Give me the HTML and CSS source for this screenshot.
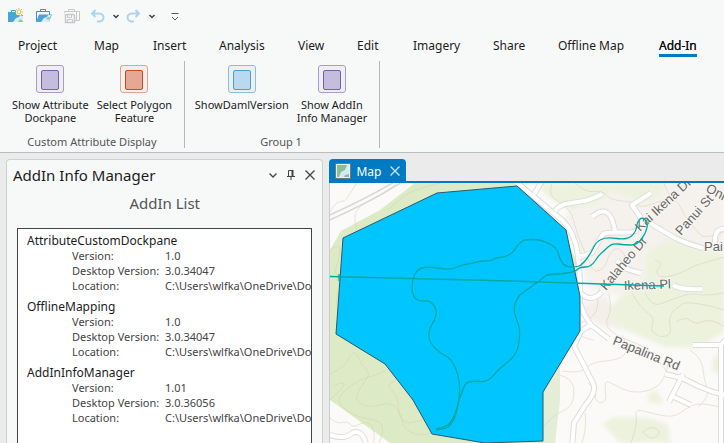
FILE: index.html
```html
<!DOCTYPE html>
<html lang="en">
<head>
<meta charset="utf-8">
<title>AddIn Info Manager</title>
<link rel="stylesheet" href="styles.css">
</head>
<body>
<header class="top">
  <div class="quick">
    <button class="quick-btn" aria-label="New project"><svg width="16" height="16" viewBox="0 0 16 16"><path d="M0 4h8v3h7v7H0z" fill="#4ba3da"/><path d="M3.500 4V2.500h4V4" fill="none" stroke="#4ba3da"/><path d="M5 14l3-4 3-1 1-2 3 1v6z" fill="#d8edf8"/><path d="M10 14l2-3 3 2v1z" fill="#9cc69b"/><circle cx="11" cy="4" r="2" fill="#fffbe0" stroke="#e0bd3b"/><path d="M11 0v1M11 7v1M7 4h1M14 4h1M8 1l1 1M14 1l-1 1M8 7l1-1M14 7l-1-1" stroke="#e0bd3b"/></svg></button>
    <button class="quick-btn" aria-label="Open project"><svg width="16" height="16" viewBox="0 0 16 16"><path d="M.5 13V3.500h13V7M4.500 3.500v-2h5v2" fill="none" stroke="#4191c7"/><path d="M3 6.500h13L13 14H0z" fill="#4ba3da"/><path d="M5 14l3-4 3-1 1-2h3l-2 7z" fill="#d8edf8"/><path d="M10 11l2-2h2l-1 3z" fill="#9cc69b"/></svg></button>
    <button class="quick-btn" aria-label="Save project"><svg width="16" height="16" viewBox="0 0 16 16" fill="none" stroke="#c6c8c9"><path d="M.5 5V3.500h15v9H11M4.500 3.500v-2h6v2M12.500 3v9"/><path d="M1.500 6.500h8l1 1v7h-9z" fill="#f7f9f8" stroke-width="1.500"/><path d="M3.500 7v2.500h4V7M3.500 14v-2.500h5V14"/></svg></button>
    <button class="quick-btn undo" aria-label="Undo"><svg width="16" height="16" viewBox="0 0 16 16" fill="none" stroke="#afd3eb" stroke-width="2"><path d="M5.500 2L2 5.500 5.500 9M2 5.500h7c6 0 6 8 0 8H7"/></svg></button>
    <button class="quick-btn arrow" aria-label="Undo list"><svg width="8" height="16" viewBox="0 0 8 16" fill="none" stroke="#3d4245" stroke-width="1.500"><path d="M1.500 7L4 9.500 6.500 7"/></svg></button>
    <button class="quick-btn redo" aria-label="Redo"><svg width="16" height="16" viewBox="0 0 16 16" fill="none" stroke="#afd3eb" stroke-width="2"><path d="M9.500 2L13 5.500 9.500 9M13 5.500H6c-6 0-6 8 0 8h2"/></svg></button>
    <button class="quick-btn arrow" aria-label="Redo list"><svg width="8" height="16" viewBox="0 0 8 16" fill="none" stroke="#3d4245" stroke-width="1.500"><path d="M1.500 7L4 9.500 6.500 7"/></svg></button>
    <button class="quick-btn customize" aria-label="Customize toolbar"><svg width="8" height="16" viewBox="0 0 8 16" fill="none" stroke="#55595b"><path d="M.5 5.500h7M1 9l3 3 3-3"/></svg></button>
  </div>
  <nav class="tabs">
    <a href="#">Project</a><a href="#">Map</a><a href="#">Insert</a><a href="#">Analysis</a><a href="#">View</a><a href="#">Edit</a><a href="#">Imagery</a><a href="#">Share</a><a href="#">Offline Map</a><a href="#" class="active">Add-In</a>
  </nav>
  <div class="ribbon">
    <section class="group attributes">
      <div class="commands">
        <button class="command"><span class="tile purple"></span>Show Attribute<br>Dockpane</button>
        <button class="command"><span class="tile orange"></span>Select Polygon<br>Feature</button>
      </div>
      <h2>Custom Attribute Display</h2>
    </section>
    <section class="group info">
      <div class="commands">
        <button class="command"><span class="tile blue"></span>ShowDamlVersion</button>
        <button class="command"><span class="tile purple"></span>Show AddIn<br>Info Manager</button>
      </div>
      <h2>Group 1</h2>
    </section>
  </div>
</header>
<main class="workspace">
  <aside class="pane">
    <div class="pane-head">
      <h1>AddIn Info Manager</h1>
      <button aria-label="Pane options"><svg width="10" height="12" viewBox="0 0 10 12" fill="none" stroke="#444" stroke-width="1.300"><path d="M1.500 4.500L5 8l3.500-3.500"/></svg></button>
      <button aria-label="Pin"><svg width="10" height="12" viewBox="0 0 10 12" fill="none" stroke="#444"><path d="M2.500 7V1.500h4V7M1 7.500h8M5 7v4"/><path d="M6.500 1v6" stroke-width="2"/></svg></button>
      <button aria-label="Close pane"><svg width="12" height="12" viewBox="0 0 12 12" fill="none" stroke="#444" stroke-width="1.300"><path d="M1.500 1.500l9 9M10.500 1.500l-9 9"/></svg></button>
    </div>
    <p class="list-title">AddIn List</p>
    <div class="list">
      <section class="addin"><h3>AttributeCustomDockpane</h3><dl><dt>Version:</dt><dd>1.0</dd><dt>Desktop Version:</dt><dd>3.0.34047</dd><dt>Location:</dt><dd>C:\Users\wlfka\OneDrive\Do</dd></dl></section>
      <section class="addin"><h3>OfflineMapping</h3><dl><dt>Version:</dt><dd>1.0</dd><dt>Desktop Version:</dt><dd>3.0.34047</dd><dt>Location:</dt><dd>C:\Users\wlfka\OneDrive\Do</dd></dl></section>
      <section class="addin"><h3>AddInInfoManager</h3><dl><dt>Version:</dt><dd>1.01</dd><dt>Desktop Version:</dt><dd>3.0.36056</dd><dt>Location:</dt><dd>C:\Users\wlfka\OneDrive\Do</dd></dl></section>
    </div>
  </aside>
  <section class="view">
    <div class="view-tabs">
      <div class="view-tab">
        <svg width="16" height="16" viewBox="0 0 16 16"><path d="M.5.5h15v15H.5z" fill="#8fbc94" stroke="#777" /><path d="M1.500 1.500h13v13h-13z" fill="none" stroke="#e9f2ea"/><path d="M14 2v9l-4 1-1 2H4l2-5 4-2 2-5z" fill="#d4ebf7"/></svg>
        <span>Map</span>
        <button aria-label="Close map"><svg width="10" height="10" viewBox="0 0 10 10" fill="none" stroke="#cfe7f8" stroke-width="1.300"><path d="M.5.5l9 9M9.500.5l-9 9"/></svg></button>
      </div>
    </div>
    <div class="map">
    <svg viewBox="330 183 394 260" preserveAspectRatio="xMinYMin slice" role="img" aria-label="Map">
      <defs>
        <filter id="soft" x="-10%" y="-10%" width="120%" height="120%"><feGaussianBlur stdDeviation="2"/></filter>
      </defs>
      <rect x="330" y="183" width="394" height="260" fill="#fbfaf9"/>
      <g filter="url(#soft)">
        <path d="M575 183H724V310L650 300 590 290 565 225z" fill="#f5f2ee"/>
        <path d="M575 310L605 295 625 330 600 325z" fill="#f3efe9"/>
      </g>
      <g fill="#dcebc5">
        <path d="M415 183H520L560 225 576 260 578 300 543 392V443H390L330 400V250L341 231 380 210z"/>
        <path d="M579 331L560 360V400L555 443H540V390z" fill="#e4eed6"/>
      </g>
      <g fill="#edf2de" filter="url(#soft)">
        <path d="M537 183H668L652 202 610 192 598 203 570 210 548 197z"/>
        <path d="M647 250L670 240 724 255V332L700 348 665 347 625 330 606 314 620 296 645 280z"/>
        <path d="M602 424L614 417 650 418 668 424 671 443H620z"/>
        <path d="M648 393L656 390 663 400 660 404 648 402zM712 360l12-10v25l-12-4z"/>
      </g>
      <g class="contours">
        <polyline points="330,212 336,201 345,202 350,193 357,183"/>
        <polyline points="357,232 353,217 360,205 375,199 388,190 397,183"/>
        <polyline points="388,210 400,199 410,192 425,187 440,183"/>
        <polyline points="330,250 341,242 339,260 334,272 340,282 336,305"/>
        <polyline points="330,374 345,367 350,354 356,352 362,366 371,374 359,389 355,401 370,408 390,402 400,411 404,430 424,437 432,432"/>
        <polyline points="385,371 374,376 360,379 341,393 338,403 352,415 368,419 380,421 384,431 379,443"/>
        <polyline points="395,380 387,386 392,390 398,399 399,418 410,425 426,418"/>
        <polyline points="330,400 342,389 346,381 335,385"/>
        <polyline points="330,418 337,424 348,421 353,428 365,421 375,427 374,443"/>
        <polyline points="552,183 548,195 562,203 572,213 578,238 588,258 594,273 605,268 610,251 620,247 628,262 620,269 600,282 598,295"/>
        <polyline points="575,183 586,193 602,190 610,200 635,202 640,208 660,201 673,198"/>
        <polyline points="664,183 668,195 680,204 685,218 695,228 704,240 724,232"/>
        <polyline points="597,293 600,310 585,322 575,324 580,338 594,340"/>
        <polyline points="609,293 612,310 604,325 618,337 642,345 657,358 668,373"/>
        <polyline points="632,293 640,307 655,318 650,330 660,338 672,334 668,319 675,308 690,300 724,310"/>
        <polyline points="645,293 652,307 668,301 690,293 707,296 724,293"/>
        <polyline points="676,322 685,316 696,325 710,318 724,326"/>
        <polyline points="655,260 664,263 655,271 661,278 680,274 695,265 715,260 724,257"/>
        <polyline points="562,371 580,374 592,362 619,360 630,349 622,335"/>
        <polyline points="668,365 664,381 651,391 630,393 613,384 604,380 607,403 595,402 596,390 588,383"/>
        <polyline points="543,428 553,415 570,408 575,395 572,379 560,375"/>
        <polyline points="724,408 702,402 686,408 675,417 657,415 634,408 638,423 631,443"/>
        <polyline points="585,413 587,427 582,443"/>
        <polyline points="643,432 648,427 658,428 660,435 650,440 643,432"/>
        <polyline points="690,350 702,358 704,380 710,397 698,407"/>
      </g>
      <g class="highway">
        <path d="M325 217Q362 201 396 181M325 222Q365 205 404 181"/>
      </g>
      <g class="casing">
        <path d="M515 181L557 216C575 228 580 250 580 292V303L584 314 591 325 609 339M665 374L682 378 698 386 713 392 735 397M533 196L542 181M555 211C564 198 578 208 602 194M592 217C605 205 613 214 615 232M579 257L592 253 603 234C612 230 626 235 636 231L643 221 632 205 651 193M648 222L675 238Q690 245 703 248M715 245C714 231 718 228 730 228M617 260C623 270 633 271 641 273M673 285Q680 290 702 289M580 292Q590 304 602 292M591 325L581 331 574 346 593 383Q597 392 586 404L574 423 572 448M693 345H721V448M721 345L728 337M683 374L669 402M674 397L691 405M330 435Q345 440 352 433 363 428 367 448"/>
      </g>
      <g class="road">
        <path d="M515 181L557 216C575 228 580 250 580 292V303L584 314 591 325 609 339M665 374L682 378 698 386 713 392 735 397M533 196L542 181M555 211C564 198 578 208 602 194M592 217C605 205 613 214 615 232M579 257L592 253 603 234C612 230 626 235 636 231L643 221 632 205 651 193M648 222L675 238Q690 245 703 248M715 245C714 231 718 228 730 228M617 260C623 270 633 271 641 273M673 285Q680 290 702 289M580 292Q590 304 602 292M591 325L581 331 574 346 593 383Q597 392 586 404L574 423 572 448M693 345H721V448M721 345L728 337M683 374L669 402M674 397L691 405M330 435Q345 440 352 433 363 428 367 448"/>
      </g>
      <g class="labels">
        <text transform="translate(640 232) rotate(-43)">Kai Ikena Dr</text>
        <text transform="translate(681 236) rotate(-48)">Panui St</text>
        <text transform="translate(705 191) rotate(28)">Oni</text>
        <text transform="translate(704 251)">Pai</text>
        <text transform="translate(606 291) rotate(-50)">Kalaheo Dr</text>
        <text transform="translate(624 290) rotate(-2)">Ikena Pl</text>
        <text transform="translate(612 344) rotate(22)">Papalina Rd</text>
      </g>
      <path class="area" d="M343 238L437 193 517 186 566 230 580 296V331L543 392V441L485 443 432 434 413 400 385 364 336 334z"/>
      <g class="trail">
        <polyline points="524,240 517,245 514,252 505,257 495,258 491,261 480,261 473,263 462,265 450,270 432,267 418,268 412,280 412,292 415,299 420,301 431,301 437,310 435,320 428,331 430,343 440,353 450,358 457,370 460,386 459,400 456,416 450,426 445,429 436,430"/>
        <polyline points="436,429 447,427 453,419 457,408 459,400 462,393 465,383 472,381 488,382 498,370 508,362 517,353 520,336 519,325 513,310 517,298 522,293 541,280 547,274 564,274 576,271 580,267 591,267 599,255 604,251 612,243 624,245 637,245 646,233 648,222 642,217 637,222 636,232 627,240 606,237 596,242 591,253 582,265 576,267 566,267 560,260 557,248 544,241 534,239 524,240"/>
        <path d="M329 276.500L510 281 664 286M339 274v7"/>
      </g>
    </svg>
    </div>
  </section>
</main>
<script src="map.js"></script>
</body>
</html>
```
FILE: styles.css
```css
* { box-sizing: border-box; }
body {
  margin: 0;
  height: 100vh;
  display: flex;
  flex-direction: column;
  overflow: hidden;
  background: #ebebeb;
  color: #1c1c1c;
  font: 12px/15px "Noto Sans", "Open Sans", sans-serif;
}
h1, h2, h3, p, dl, dd { margin: 0; font-weight: 400; font-size: inherit; }
button { padding: 0; border: 0; background: none; font: inherit; color: inherit; }
svg { display: block; }
a { color: inherit; text-decoration: none; }

.top { background: #f7f9f8; border-bottom: 1px solid #b9bdbf; }
.quick { display: flex; align-items: center; height: 32px; padding-left: 8px; gap: 12px; }
.undo { margin-left: -2px; }
.redo { margin-left: -6px; }
.arrow { margin-left: -6px; }
.customize { margin-left: 3px; }

.tabs {
  display: grid;
  grid-template-columns: 76px 59px 66px 79px 59px 56px 80px 65px 101px auto;
  justify-content: start;
  padding: 6px 0 3px 18px;
}
.tabs a { justify-self: start; line-height: 16px; border-bottom: 3px solid transparent; }
.tabs .active { border-color: #007ac2; color: #111; text-shadow: 0 0 #111; }

.ribbon { display: flex; height: 92px; padding: 1px 0 4px; }
.group { display: flex; flex-direction: column; border-right: 1px solid #b5b8b9; }
.attributes { width: 185px; }
.info { width: 195px; padding-right: 2px; }
.commands { display: flex; justify-content: center; gap: 8px; flex: 1; }
.command { align-self: flex-start; padding-top: 4px; font-size: 11px; line-height: 13px; text-align: center; white-space: nowrap; }
.group h2 { font-size: 11px; line-height: 13px; padding-bottom: 0; color: #555; text-align: center; }
.tile { display: block; width: 28px; height: 28px; margin: 0 auto 5px; padding: 4px; border: 1px solid; border-radius: 3px; background: #efefef; }
.tile::before { content: ""; display: block; height: 18px; border: 1px solid; border-radius: 2px; }
.purple { border-color: #a99bcf; }
.purple::before { background: #c5bddd; border-color: #7562a6; }
.orange { border-color: #e9a18c; }
.orange::before { background: #e5a895; border-color: #c9491f; }
.blue { border-color: #84bfe6; }
.blue::before { background: #bbd9ee; border-color: #4b9fd4; }

.workspace { flex: 1; min-height: 0; display: flex; gap: 6px; padding: 6px 0 0 6px; }
.pane { flex: 0 0 317px; display: flex; flex-direction: column; border: 1px solid #cdd0d1; border-bottom: 0; border-radius: 4px 4px 0 0; background: #f7f9f8; }
.pane-head { display: flex; align-items: center; gap: 8px; padding: 0 6px; height: 30px; }
.pane-head h1 { flex: 1; font-size: 15px; line-height: 20px; }
.list-title { margin-top: 3px; text-align: center; font-size: 15px; line-height: 20px; color: #555; }
.list { flex: 1; min-height: 0; margin: 15px 10px 0; padding: 4px 0 0 9px; border: 1px solid #444; border-bottom: 0; background: #fff; overflow: hidden; }
.addin { margin-bottom: 6px; }
.addin dl { display: grid; grid-template-columns: 93px 1fr; margin-left: 45px; font-size: 11px; color: #444; white-space: nowrap; }

.view { flex: 1; min-width: 0; display: flex; flex-direction: column; }
.view-tabs { border-bottom: 2px solid #007ac2; }
.view-tab { display: flex; align-items: center; width: 77px; height: 22px; padding: 2px 6px 0; gap: 5px; border-radius: 4px 4px 0 0; background: #007ac2; color: #fff; }
.view-tab span { flex: 1; }
.map { flex: 1; min-height: 0; border-left: 1px solid #c9cdd0; background: #faf9f7; }
.map svg { width: 100%; height: 100%; }
.contours { fill: none; stroke: #d8cbb3; stroke-opacity: .5; }
.highway { fill: none; stroke: #d6d6d6; stroke-width: 1.500px; }
.casing { fill: none; stroke: #dfdddb; stroke-width: 6px; stroke-linejoin: round; }
.road { fill: none; stroke: #fff; stroke-width: 4px; stroke-linejoin: round; }
.labels { font: 13px "Liberation Sans", sans-serif; fill: #666; stroke: #f8f7f3; stroke-width: 2px; paint-order: stroke; }
.area { fill: #00c5ff; stroke: #245a70; }
.trail { fill: none; stroke: #00a9a5; stroke-width: 1.300px; stroke-linejoin: round; }
```
FILE: map.js
```js
// Round the corners of every line by curving through segment midpoints.
document.querySelectorAll('.map polyline').forEach(line => {
  const p = line.getAttribute('points').trim().split(/\s+/).map(s => s.split(',').map(Number));
  let d = `M${p[0]}`;
  for (let i = 1; i < p.length - 1; i++) {
    const end = i === p.length - 2 ? p[i + 1] : [(p[i][0] + p[i + 1][0]) / 2, (p[i][1] + p[i + 1][1]) / 2];
    d += `Q${p[i]} ${end}`;
  }
  const path = document.createElementNS('http://www.w3.org/2000/svg', 'path');
  path.setAttribute('d', d);
  line.replaceWith(path);
});
```
